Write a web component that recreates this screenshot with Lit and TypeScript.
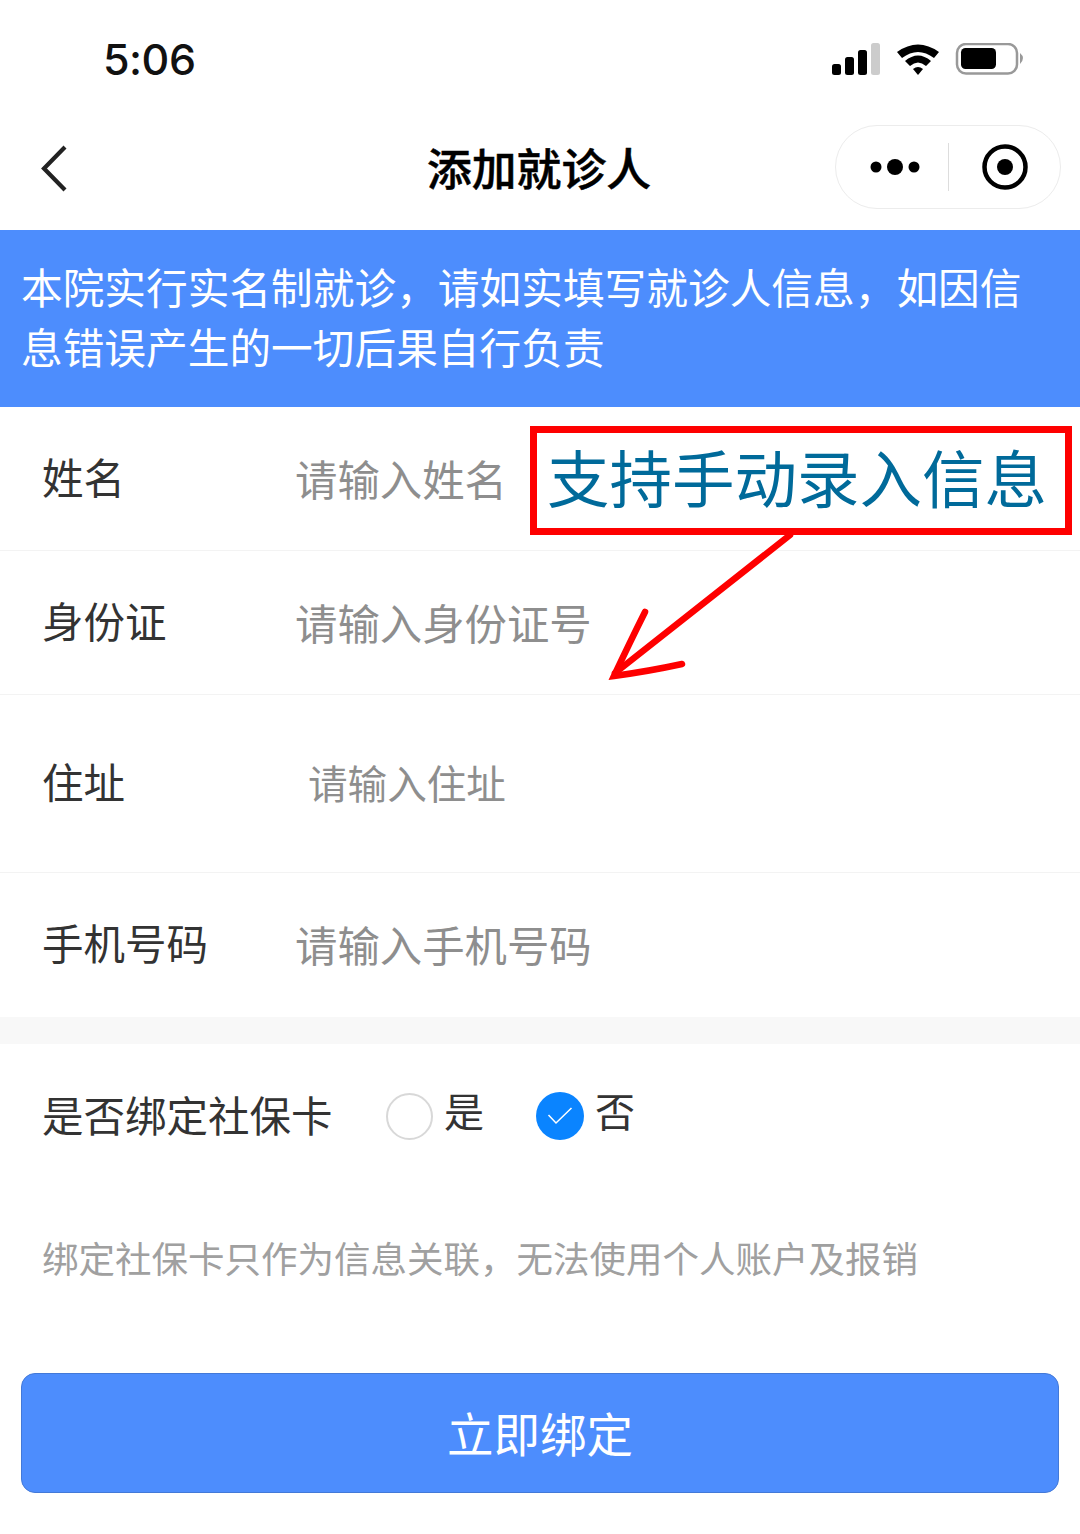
import { LitElement, html, css } from 'lit';
import { customElement } from 'lit/decorators.js';

@customElement('app-root')
export class AppRoot extends LitElement {
  static styles = css`
    :host {
      display: block;
      position: relative;
      width: 1080px;
      height: 1534px;
      overflow: hidden;
      background: #fff;
      font-family: "Noto Sans CJK SC", "Liberation Sans", sans-serif;
      color: #333;
    }

    /* status bar */
    .status {
      height: 125px;
      display: flex;
      align-items: flex-start;
      justify-content: space-between;
      box-sizing: border-box;
      padding: 34px 54px 0 103px;
    }
    .time {
      font: 500 43px/50px Inter, "Liberation Sans", sans-serif;
      color: #111;
      letter-spacing: -0.5px;
    }
    .status-icons { display: block; margin-top: 9px; }

    /* nav */
    .nav {
      height: 105px;
      display: flex;
      align-items: center;
      position: relative;
      padding-left: 40px;
    }
    .back { display: block; margin-top: -18px; }
    .title {
      position: absolute;
      left: 0;
      right: 2px;
      top: 12px;
      text-align: center;
      font-size: 44.8px;
      line-height: 60px;
      font-weight: 500;
      -webkit-text-stroke: 0.5px #000;
      color: #000;
    }
    .capsule {
      position: absolute;
      left: 835px;
      top: 0;
      width: 226px;
      height: 84px;
      box-sizing: border-box;
      border: 1px solid #ececec;
      border-radius: 42px;
      display: flex;
      align-items: center;
    }

    /* banner */
    .banner {
      height: 177px;
      box-sizing: border-box;
      background: #4d8dfd;
      color: #fff;
      padding: 26px 21px 0;
      font-size: 41.7px;
      line-height: 60px;
      font-weight: 400;
    }

    /* form */
    .row {
      display: flex;
      align-items: center;
      box-sizing: border-box;
      height: 144px;
      padding-left: 42px;
      border-bottom: 1px solid #f3f3f3;
    }
    .row.tall { height: 178px; }
    .row.last { border-bottom: none; }
    .label {
      width: 253px;
      font-size: 41.5px;
      line-height: 60px;
      font-weight: 400;
      color: #333;
      margin-top: -6px;
    }
    .ph {
      font-size: 42.4px;
      line-height: 60px;
      font-weight: 400;
      color: #8e8e8e;
      margin-top: -2px;
    }
    .row.tall .ph {
      font-size: 39.6px;
      margin-left: 13px;
      margin-top: -4px;
    }
    .gap { height: 27px; background: #f8f8f8; }

    /* social card choice */
    .bind {
      display: flex;
      align-items: center;
      height: 144px;
      padding-left: 42px;
    }
    .bind .label { width: 344px; margin-top: -4px; }
    .radio {
      width: 47px;
      height: 47px;
      box-sizing: border-box;
      border-radius: 50%;
      border: 2px solid #d8d8d8;
      flex: none;
    }
    .radio.on {
      border: none;
      width: 48px;
      height: 48px;
      margin-left: -1px;
      background: #0a84ff;
      display: flex;
      align-items: center;
      justify-content: center;
    }
    .opt {
      font-size: 40px;
      line-height: 56px;
      margin: -12px 53px 0 11px;
      color: #333;
      font-weight: 400;
    }
    .hint {
      padding: 42px 0 0 42px;
      height: 185px;
      box-sizing: border-box;
      font-size: 36.5px;
      line-height: 56px;
      font-weight: 400;
      color: #a0a0a0;
    }
    .submit {
      margin: 0 21px;
      height: 120px;
      box-sizing: border-box;
      border: 1px solid #4379d8;
      border-radius: 14px;
      background: #4d8dfd;
      color: #fff;
      display: flex;
      align-items: center;
      justify-content: center;
      font-size: 46.5px;
      font-weight: 400;
      padding-bottom: 4px;
    }

    /* red annotation drawn on top of the screenshot */
    .note {
      position: absolute;
      left: 530px;
      top: 426px;
      width: 542px;
      height: 109px;
      box-sizing: border-box;
      border: 7px solid #fe0000;
      color: #006a9a;
      font-size: 62.5px;
      line-height: 86px;
      padding-left: 10px;
      white-space: nowrap;
      font-weight: 400;
    }
    .arrow {
      position: absolute;
      left: 600px;
      top: 530px;
    }
  `;

  render() {
    return html`
      <div class="status">
        <div class="time">5:06</div>
        <svg class="status-icons" width="196" height="36" viewBox="0 0 196 36">
          <g fill="#000">
            <rect x="2" y="21" width="9" height="11" rx="2.5"/>
            <rect x="15" y="14" width="9" height="18" rx="2.5"/>
            <rect x="28" y="7" width="9" height="25" rx="2.5"/>
          </g>
          <rect x="41" y="0" width="9" height="32" rx="2.5" fill="#ccc"/>
          <path d="M67 9 Q88 -6 109 9 L104 15 Q88 3 72 15 Z" fill="#000"/>
          <path d="M75 18 Q88 7 101 18 L96 23 Q88 16 80 23 Z" fill="#000"/>
          <path d="M83 26 Q88 22 93 26 L88 32 Z" fill="#000"/>
          <rect x="127" y="1" width="60" height="29.5" rx="9" fill="none" stroke="#999" stroke-width="2.5"/>
          <rect x="131" y="5" width="35" height="21" rx="4.5" fill="#000"/>
          <path d="M190 10 Q196 15 190 21 Z" fill="#999"/>
        </svg>
      </div>

      <div class="nav">
        <svg class="back" width="30" height="48" viewBox="0 0 30 48">
          <path d="M25 2 L4 23.5 L25 45" fill="none" stroke="#222" stroke-width="4.2"/>
        </svg>
        <div class="title">添加就诊人</div>
        <div class="capsule">
          <svg width="224" height="82" viewBox="0 0 224 82">
            <g fill="#000">
              <circle cx="40" cy="41" r="5.5"/>
              <circle cx="59" cy="41" r="8"/>
              <circle cx="78" cy="41" r="5.5"/>
            </g>
            <rect x="112" y="17" width="1" height="48" fill="#ddd"/>
            <circle cx="169" cy="41" r="20.5" fill="none" stroke="#000" stroke-width="4.5"/>
            <circle cx="169" cy="41" r="8" fill="#000"/>
          </svg>
        </div>
      </div>

      <div class="banner">本院实行实名制就诊，请如实填写就诊人信息，如因信<br>息错误产生的一切后果自行负责</div>

      <div class="row"><div class="label">姓名</div><div class="ph">请输入姓名</div></div>
      <div class="row"><div class="label">身份证</div><div class="ph">请输入身份证号</div></div>
      <div class="row tall"><div class="label">住址</div><div class="ph">请输入住址</div></div>
      <div class="row last"><div class="label">手机号码</div><div class="ph">请输入手机号码</div></div>
      <div class="gap"></div>

      <div class="bind">
        <div class="label">是否绑定社保卡</div>
        <div class="radio"></div><div class="opt">是</div>
        <div class="radio on">
          <svg width="26" height="18" viewBox="0 0 26 18">
            <path d="M1.5 8 L9 16 L24.5 1" fill="none" stroke="#fff" stroke-width="1.5"/>
          </svg>
        </div>
        <div class="opt">否</div>
      </div>
      <div class="hint">绑定社保卡只作为信息关联，无法使用个人账户及报销</div>
      <div class="submit">立即绑定</div>

      <div class="note">支持手动录入信息</div>
      <svg class="arrow" width="200" height="155" viewBox="0 0 200 155">
        <g fill="none" stroke="#fe0000" stroke-linecap="round">
          <path d="M190 5 L15 143" stroke-width="6.5"/>
          <path d="M45 82 Q30 112 14 146 Q50 141 82 134" stroke-width="6.5"/>
        </g>
      </svg>
    `;
  }
}
